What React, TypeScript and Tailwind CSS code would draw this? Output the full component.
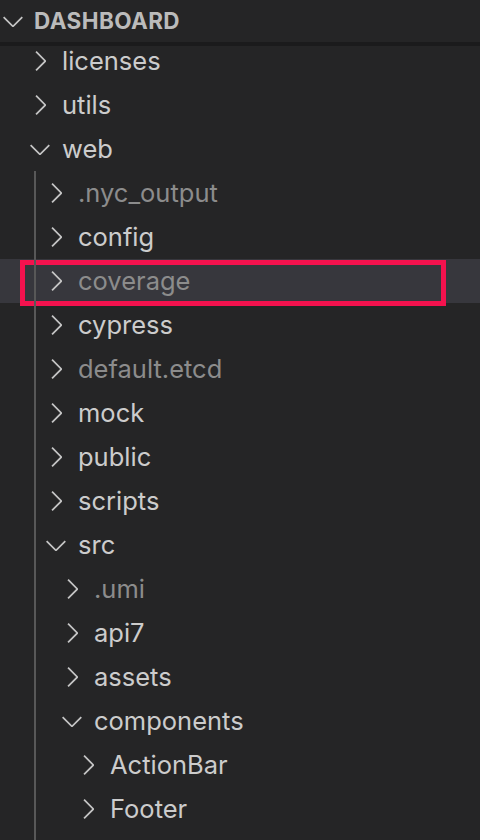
import React from "react";

type Node = {
  name: string;
  open?: boolean;
  dim?: boolean;
  selected?: boolean;
  guide?: boolean;
  children?: Node[];
};

const tree: Node[] = [
  { name: "licenses" },
  { name: "utils" },
  {
    name: "web",
    open: true,
    guide: true,
    children: [
      { name: ".nyc_output", dim: true },
      { name: "config" },
      { name: "coverage", dim: true, selected: true },
      { name: "cypress" },
      { name: "default.etcd", dim: true },
      { name: "mock" },
      { name: "public" },
      { name: "scripts" },
      {
        name: "src",
        open: true,
        children: [
          { name: ".umi", dim: true },
          { name: "api7" },
          { name: "assets" },
          {
            name: "components",
            open: true,
            children: [{ name: "ActionBar" }, { name: "Footer" }],
          },
        ],
      },
    ],
  },
];

function ChevronRight() {
  return (
    <svg width="32" height="32" viewBox="0 0 16 16" fill="#c5c5c5">
      <path d="M10.072 8.024L5.715 3.667l.618-.62L11 7.716v.618L6.333 13l-.618-.619 4.357-4.357z" />
    </svg>
  );
}

function ChevronDown() {
  return (
    <svg width="32" height="32" viewBox="0 0 16 16" fill="#c5c5c5">
      <path d="M7.976 10.072l4.357-4.357.62.618L8.284 11h-.618L3 6.333l.619-.618 4.357 4.357z" />
    </svg>
  );
}

const pads = ["pl-[24px]", "pl-[40px]", "pl-[56px]", "pl-[72px]"];

function Row({ node, depth }: { node: Node; depth: number }) {
  return (
    <>
      <div
        className={`relative flex h-[44px] shrink-0 items-center ${pads[depth]} ${
          node.selected ? "bg-[#37373d]" : ""
        }`}
      >
        {node.open ? <ChevronDown /> : <ChevronRight />}
        <span
          className={`ml-[6px] text-[25.5px] ${
            node.dim ? "text-[#8c8c8c]" : "text-[#cccccc]"
          }`}
        >
          {node.name}
        </span>
        {node.selected && (
          <div className="absolute left-[20px] top-[1px] h-[46px] w-[426px] border-[5px] border-[#f4124e]" />
        )}
      </div>
      {node.open && node.children && (
        <div className="relative">
          {node.guide && (
            <div className="absolute left-[34px] top-0 -bottom-[40px] z-10 w-[2px] bg-[#585858]" />
          )}
          {node.children.map((c) => (
            <Row key={c.name} node={c} depth={depth + 1} />
          ))}
        </div>
      )}
    </>
  );
}

export default function App() {
  return (
    <div
      className="relative h-[840px] w-[480px] overflow-hidden bg-[#252526]"
      style={{ fontFamily: "Inter, 'Noto Sans', sans-serif" }}
    >
      <div className="flex h-[39px] items-center pt-[3px]">
        <div className="-ml-[3px]">
          <ChevronDown />
        </div>
        <span className="ml-[5px] text-[22.5px] font-bold tracking-[0.4px] text-[#bbbbbb]">
          DASHBOARD
        </span>
      </div>
      <div className="absolute left-0 right-0 top-[42px] z-20 h-[4px] bg-[#1b1b1c]" />
      <div>
        {tree.map((n) => (
          <Row key={n.name} node={n} depth={0} />
        ))}
      </div>
    </div>
  );
}
